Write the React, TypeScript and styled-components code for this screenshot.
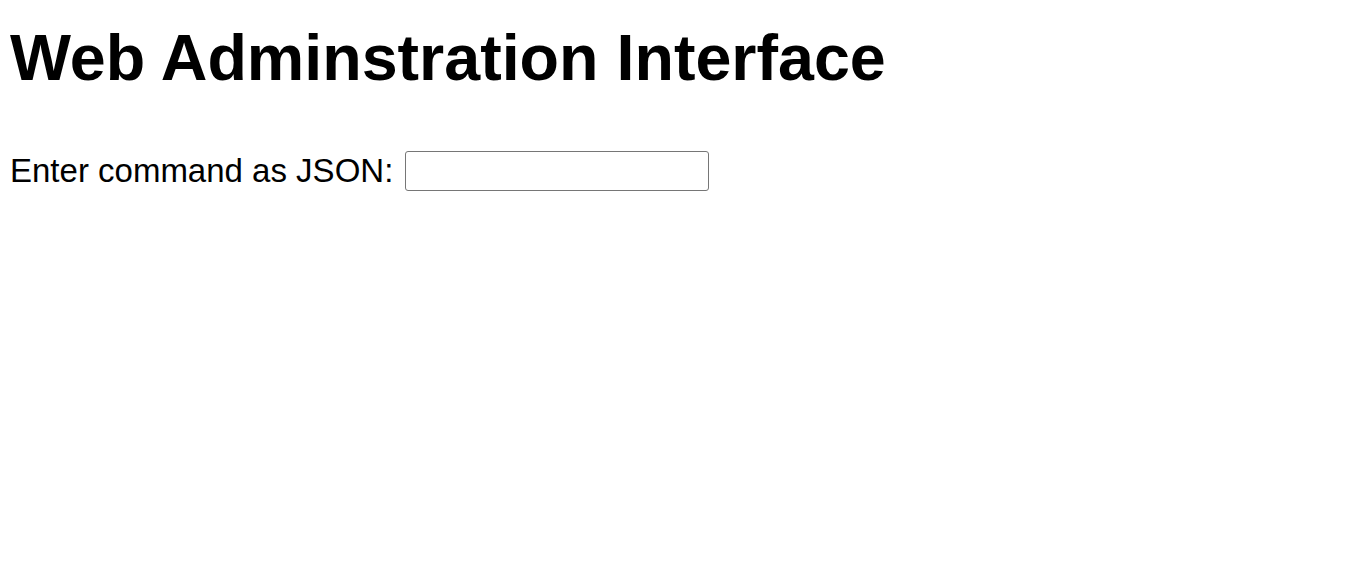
import React, { useState } from "react";
import styled, { createGlobalStyle } from "styled-components";

const GlobalStyle = createGlobalStyle`
  html, body {
    margin: 0;
    padding: 0;
    background: #ffffff;
  }
  body {
    font-family: "Liberation Sans", Arial, sans-serif;
    color: #000000;
  }
`;

const Page = styled.div`
  padding: 21px 10px;
`;

const Title = styled.h1`
  margin: 0 0 56px;
  font-size: 64.6px;
  line-height: 74px;
  font-weight: 700;
`;

const CommandRow = styled.form`
  display: flex;
  align-items: center;
  gap: 12px;
  font-size: 33px;
  line-height: 40px;
`;

const CommandInput = styled.input`
  box-sizing: border-box;
  width: 304px;
  height: 40px;
  margin: 0;
  padding: 2px 6px;
  border: 1.5px solid #767676;
  border-radius: 3px;
  font-size: 24px;
  font-family: inherit;
  background: #ffffff;
`;

export default function App() {
  const [command, setCommand] = useState("");
  return (
    <>
      <GlobalStyle />
      <Page>
        <Title>Web Adminstration Interface</Title>
        <CommandRow onSubmit={(e) => e.preventDefault()}>
          <label htmlFor="command">Enter command as JSON:</label>
          <CommandInput
            id="command"
            type="text"
            value={command}
            onChange={(e) => setCommand(e.target.value)}
          />
        </CommandRow>
      </Page>
    </>
  );
}
